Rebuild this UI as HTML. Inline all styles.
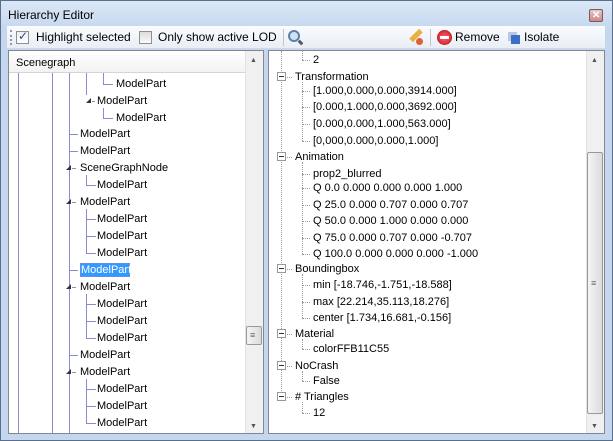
<!DOCTYPE html><html><head><style>
*{margin:0;padding:0;box-sizing:border-box}
body{width:613px;height:441px;overflow:hidden;background:#c4d7ee;font-family:"Liberation Sans",sans-serif;position:relative}
.a{position:absolute}
.t{position:absolute;font-size:11px;color:#000;white-space:nowrap;line-height:13px}
.v{position:absolute;width:1px;background:#8a8ad0}
.h{position:absolute;height:1px;background:#8a8ad0}
.tri{position:absolute;width:0;height:0;border-left:5px solid transparent;border-bottom:5px solid #333}
.dv{position:absolute;width:1px;border-left:1px dotted #999}
.dh{position:absolute;height:1px;border-top:1px dotted #999}
.bx{position:absolute;width:9px;height:9px;border:1px solid #999;background:#fff}
.bx:after{content:"";position:absolute;left:1px;top:3px;width:5px;height:1px;background:#333}
</style></head><body>
<div class="a" style="left:0;top:0;width:613px;height:441px;border:1px solid #5a6f8a;background:linear-gradient(#dbe7f6,#c4d7ee 30px)"></div>
<div class="t" style="left:8px;top:9px;font-size:12px">Hierarchy Editor</div>
<div class="a" style="left:589px;top:9px;width:14px;height:13px;border:1px solid #7a5a5a;border-radius:2px;background:linear-gradient(#e8c8c8,#c88)"></div>
<div class="t" style="left:592px;top:9px;font-size:10px;font-weight:bold;color:#fff">✕</div>
<div class="a" style="left:7px;top:26px;width:598px;height:23px;background:linear-gradient(#fafcff,#e9eef5);border-bottom:1px solid #cfd8e4"></div>
<div class="a" style="left:10px;top:30px;width:2px;height:15px;border-left:2px dotted #999"></div>
<div class="a" style="left:16px;top:31px;width:13px;height:13px;border:1px solid #8f8f8f;background:linear-gradient(#eee,#fff)"></div>
<div class="t" style="left:18px;top:30px;color:#2a4a9a;font-size:12px">✓</div>
<div class="t" style="left:36px;top:31px;font-size:12px">Highlight selected</div>
<div class="a" style="left:139px;top:31px;width:13px;height:13px;border:1px solid #8f8f8f;background:linear-gradient(#ddd,#fafafa)"></div>
<div class="t" style="left:158px;top:31px;font-size:12px">Only show active LOD</div>
<div class="a" style="left:283px;top:29px;width:1px;height:17px;background:#c5c5c5"></div>
<div class="a" style="left:288px;top:30px;width:12px;height:12px;border:2px solid #5f7fa8;border-radius:50%;background:#cfe2f5"></div>
<div class="a" style="left:298px;top:41px;width:5px;height:3px;background:#556;transform:rotate(45deg)"></div>
<div class="a" style="left:409px;top:33px;width:14px;height:5px;background:#e8b040;transform:rotate(-45deg)"></div>
<div class="a" style="left:416px;top:38px;width:7px;height:7px;border-radius:50%;background:#e06030"></div>
<div class="a" style="left:430px;top:29px;width:1px;height:17px;background:#c5c5c5"></div>
<div class="a" style="left:437px;top:30px;width:15px;height:15px;border-radius:50%;background:radial-gradient(#f58,#d33 70%);border:1px solid #b22"></div>
<div class="a" style="left:440px;top:36px;width:9px;height:3px;background:#fff"></div>
<div class="t" style="left:455px;top:31px;font-size:12px">Remove</div>
<div class="a" style="left:508px;top:32px;width:9px;height:9px;background:#b8c8e0"></div>
<div class="a" style="left:511px;top:35px;width:9px;height:9px;background:#3a70c8"></div>
<div class="t" style="left:524px;top:31px;font-size:12px">Isolate</div>
<!-- left panel -->
<div class="a" style="left:8px;top:50px;width:256px;height:384px;background:#fff;border:1px solid #828790"></div>
<div class="a" style="left:9px;top:51px;width:236px;height:22px;background:linear-gradient(#fff,#f3f3f3);border-bottom:1px solid #d5d5d5"></div>
<div class="t" style="left:16px;top:57px">Scenegraph</div>
<div class="a" style="left:245px;top:51px;width:18px;height:382px;background:#f0f0f0;border-left:1px solid #e3e3e3"></div>
<div class="t" style="left:250px;top:54px;font-size:7px;color:#555">▲</div>
<div class="t" style="left:250px;top:420px;font-size:7px;color:#555">▼</div>
<div class="a" style="left:246px;top:326px;width:16px;height:19px;border:1px solid #999;border-radius:2px;background:linear-gradient(90deg,#f4f4f4,#dcdcdc)"></div>
<div class="t" style="left:250px;top:329px;font-size:9px;color:#666">≡</div>
<div class="v" style="left:18px;top:73px;height:360px"></div>
<div class="v" style="left:52px;top:73px;height:360px"></div>
<div class="v" style="left:69px;top:73px;height:360px"></div>
<div class="v" style="left:86px;top:73px;height:22px"></div>
<div class="v" style="left:103px;top:73px;height:11px"></div><div class="h" style="left:103px;top:84px;width:10px"></div>
<div class="tri" style="left:86px;top:98px"></div><div class="h" style="left:92px;top:101px;width:3px"></div>
<div class="v" style="left:103px;top:108px;height:10px"></div><div class="h" style="left:103px;top:118px;width:10px"></div>
<div class="h" style="left:69px;top:134px;width:9px"></div>
<div class="h" style="left:69px;top:151px;width:9px"></div>
<div class="tri" style="left:66px;top:165px"></div><div class="h" style="left:72px;top:168px;width:4px"></div>
<div class="v" style="left:86px;top:175px;height:10px"></div><div class="h" style="left:86px;top:185px;width:10px"></div>
<div class="tri" style="left:66px;top:199px"></div><div class="h" style="left:72px;top:202px;width:4px"></div>
<div class="v" style="left:86px;top:209px;height:44px"></div>
<div class="h" style="left:86px;top:219px;width:10px"></div><div class="h" style="left:86px;top:236px;width:10px"></div><div class="h" style="left:86px;top:253px;width:10px"></div>
<div class="h" style="left:69px;top:270px;width:9px"></div>
<div class="tri" style="left:66px;top:284px"></div><div class="h" style="left:72px;top:287px;width:4px"></div>
<div class="v" style="left:86px;top:294px;height:44px"></div>
<div class="h" style="left:86px;top:304px;width:10px"></div><div class="h" style="left:86px;top:321px;width:10px"></div><div class="h" style="left:86px;top:338px;width:10px"></div>
<div class="h" style="left:69px;top:355px;width:9px"></div>
<div class="tri" style="left:66px;top:369px"></div><div class="h" style="left:72px;top:372px;width:4px"></div>
<div class="v" style="left:86px;top:379px;height:44px"></div>
<div class="h" style="left:86px;top:389px;width:10px"></div><div class="h" style="left:86px;top:406px;width:10px"></div><div class="h" style="left:86px;top:423px;width:10px"></div>
<div class="t" style="left:116px;top:78px">ModelPart</div>
<div class="t" style="left:97px;top:95px">ModelPart</div>
<div class="t" style="left:116px;top:112px">ModelPart</div>
<div class="t" style="left:80px;top:128px">ModelPart</div>
<div class="t" style="left:80px;top:145px">ModelPart</div>
<div class="t" style="left:80px;top:162px">SceneGraphNode</div>
<div class="t" style="left:97px;top:179px">ModelPart</div>
<div class="t" style="left:80px;top:196px">ModelPart</div>
<div class="t" style="left:97px;top:213px">ModelPart</div>
<div class="t" style="left:97px;top:230px">ModelPart</div>
<div class="t" style="left:97px;top:247px">ModelPart</div>
<div class="a" style="left:80px;top:263px;width:50px;height:14px;background:#3399ff;border:1px dotted #88c"></div>
<div class="t" style="left:81px;top:264px;color:#fff">ModelPart</div>
<div class="t" style="left:80px;top:281px">ModelPart</div>
<div class="t" style="left:97px;top:298px">ModelPart</div>
<div class="t" style="left:97px;top:315px">ModelPart</div>
<div class="t" style="left:97px;top:332px">ModelPart</div>
<div class="t" style="left:80px;top:349px">ModelPart</div>
<div class="t" style="left:80px;top:366px">ModelPart</div>
<div class="t" style="left:97px;top:383px">ModelPart</div>
<div class="t" style="left:97px;top:400px">ModelPart</div>
<div class="t" style="left:97px;top:417px">ModelPart</div>
<!-- right panel -->
<div class="a" style="left:268px;top:50px;width:337px;height:384px;background:#fff;border:1px solid #828790"></div>
<div class="a" style="left:586px;top:51px;width:18px;height:382px;background:#f0f0f0;border-left:1px solid #e3e3e3"></div>
<div class="t" style="left:591px;top:54px;font-size:7px;color:#555">▲</div>
<div class="t" style="left:591px;top:420px;font-size:7px;color:#555">▼</div>
<div class="a" style="left:587px;top:152px;width:16px;height:262px;border:1px solid #999;border-radius:2px;background:linear-gradient(90deg,#f4f4f4,#dcdcdc)"></div>
<div class="t" style="left:591px;top:277px;font-size:9px;color:#666">≡</div>
<div class="dv" style="left:281px;top:51px;height:346px"></div>
<div class="dv" style="left:302px;top:51px;height:9px"></div><div class="dh" style="left:302px;top:60px;width:8px"></div>
<div class="t" style="left:313px;top:54px">2</div>
<div class="bx" style="left:277px;top:72px"></div><div class="dh" style="left:287px;top:77px;width:5px"></div><div class="t" style="left:295px;top:71px">Transformation</div>
<div class="dv" style="left:302px;top:82px;height:59px"></div>
<div class="dh" style="left:302px;top:91px;width:8px"></div><div class="t" style="left:313px;top:85px">[1.000,0.000,0.000,3914.000]</div>
<div class="dh" style="left:302px;top:107px;width:8px"></div><div class="t" style="left:313px;top:101px">[0.000,1.000,0.000,3692.000]</div>
<div class="dh" style="left:302px;top:124px;width:8px"></div><div class="t" style="left:313px;top:118px">[0.000,0.000,1.000,563.000]</div>
<div class="dh" style="left:302px;top:141px;width:8px"></div><div class="t" style="left:313px;top:135px">[0,000,0.000,0.000,1.000]</div>
<div class="bx" style="left:277px;top:152px"></div><div class="dh" style="left:287px;top:157px;width:5px"></div><div class="t" style="left:295px;top:151px">Animation</div>
<div class="dv" style="left:302px;top:162px;height:92px"></div>
<div class="dh" style="left:302px;top:174px;width:8px"></div><div class="t" style="left:313px;top:168px">prop2_blurred</div>
<div class="dh" style="left:302px;top:188px;width:8px"></div><div class="t" style="left:313px;top:182px">Q 0.0 0.000 0.000 0.000 1.000</div>
<div class="dh" style="left:302px;top:205px;width:8px"></div><div class="t" style="left:313px;top:199px">Q 25.0 0.000 0.707 0.000 0.707</div>
<div class="dh" style="left:302px;top:221px;width:8px"></div><div class="t" style="left:313px;top:215px">Q 50.0 0.000 1.000 0.000 0.000</div>
<div class="dh" style="left:302px;top:238px;width:8px"></div><div class="t" style="left:313px;top:232px">Q 75.0 0.000 0.707 0.000 -0.707</div>
<div class="dh" style="left:302px;top:254px;width:8px"></div><div class="t" style="left:313px;top:248px">Q 100.0 0.000 0.000 0.000 -1.000</div>
<div class="bx" style="left:277px;top:264px"></div><div class="dh" style="left:287px;top:269px;width:5px"></div><div class="t" style="left:295px;top:263px">Boundingbox</div>
<div class="dv" style="left:302px;top:274px;height:44px"></div>
<div class="dh" style="left:302px;top:285px;width:8px"></div><div class="t" style="left:313px;top:279px">min [-18.746,-1.751,-18.588]</div>
<div class="dh" style="left:302px;top:302px;width:8px"></div><div class="t" style="left:313px;top:296px">max [22.214,35.113,18.276]</div>
<div class="dh" style="left:302px;top:318px;width:8px"></div><div class="t" style="left:313px;top:312px">center [1.734,16.681,-0.156]</div>
<div class="bx" style="left:277px;top:329px"></div><div class="dh" style="left:287px;top:334px;width:5px"></div><div class="t" style="left:295px;top:328px">Material</div>
<div class="dv" style="left:302px;top:339px;height:10px"></div><div class="dh" style="left:302px;top:349px;width:8px"></div><div class="t" style="left:313px;top:343px">colorFFB11C55</div>
<div class="bx" style="left:277px;top:361px"></div><div class="dh" style="left:287px;top:366px;width:5px"></div><div class="t" style="left:295px;top:360px">NoCrash</div>
<div class="dv" style="left:302px;top:371px;height:10px"></div><div class="dh" style="left:302px;top:381px;width:8px"></div><div class="t" style="left:313px;top:375px">False</div>
<div class="bx" style="left:277px;top:392px"></div><div class="dh" style="left:287px;top:397px;width:5px"></div><div class="t" style="left:295px;top:391px"># Triangles</div>
<div class="dv" style="left:302px;top:402px;height:11px"></div><div class="dh" style="left:302px;top:413px;width:8px"></div><div class="t" style="left:313px;top:407px">12</div>
</body></html>
